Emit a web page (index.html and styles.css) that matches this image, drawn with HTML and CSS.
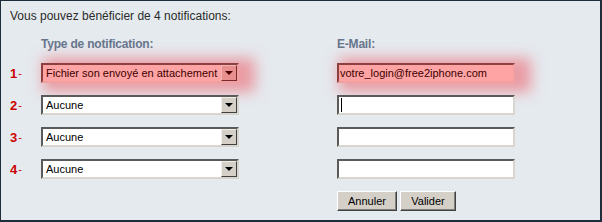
FILE: index.html
```html
<!DOCTYPE html>
<html lang="fr">
<head>
    <meta charset="UTF-8">
    <title>Notifications</title>
    <link rel="stylesheet" href="styles.css">
</head>
<body>
    <div class="panel">
        <p class="intro">Vous pouvez bénéficier de 4 notifications:</p>
        <div class="grid">
            <div></div>
            <div class="head">Type de notification:</div>
            <div></div>
            <div class="head">E-Mail:</div>

            <div class="num">1<span>-</span></div>
            <div class="select error"><span class="val">Fichier son envoyé en attachement</span><span class="arrow"></span></div>
            <div></div>
            <div class="input error">votre_login@free2iphone.com</div>

            <div class="num">2<span>-</span></div>
            <div class="select"><span class="val">Aucune</span><span class="arrow"></span></div>
            <div></div>
            <div class="input"><span class="caret"></span></div>

            <div class="num">3<span>-</span></div>
            <div class="select"><span class="val">Aucune</span><span class="arrow"></span></div>
            <div></div>
            <div class="input"></div>

            <div class="num">4<span>-</span></div>
            <div class="select"><span class="val">Aucune</span><span class="arrow"></span></div>
            <div></div>
            <div class="input"></div>

            <div></div>
            <div></div>
            <div></div>
            <div class="actions">
                <button class="btn btn-cancel">Annuler</button>
                <button class="btn btn-ok">Valider</button>
            </div>
        </div>
    </div>
</body>
</html>
```

FILE: styles.css
```css
* {
    margin: 0;
    padding: 0;
    box-sizing: border-box;
}
body {
    font-family: 'Liberation Sans', Arial, sans-serif;
    font-size: 12px;
    background: #e5eaef;
}
.panel {
    width: 602px;
    height: 222px;
    background: #e5eaef;
    border: 1px solid #1f2c39;
    border-right-width: 2px;
    border-bottom-width: 2px;
    padding: 8px 0 0 9px;
}
.intro {
    line-height: 14px;
    color: #2a2a2a;
}
.grid {
    display: grid;
    grid-template-columns: 31px 198px 98px 178px;
    grid-template-rows: 14px repeat(5, 20px);
    row-gap: 12px;
    margin-top: 14px;
}
.grid > div:nth-child(-n+4) {
    margin-bottom: 1px;
}
.head {
    font-weight: bold;
    color: #66768c;
    line-height: 14px;
    letter-spacing: -0.2px;
}
.num {
    color: #cc0000;
    font-weight: bold;
    display: flex;
    align-items: center;
    font-size: 13px;
}
.num span {
    font-weight: normal;
    font-size: 11px;
    margin-left: 1px;
}
.select,
.input {
    height: 20px;
    font-size: 11px;
    background: #fff;
    border: 2px solid;
    border-color: #5a5a5a #d8d5cf #d8d5cf #5a5a5a;
    display: flex;
    align-items: center;
    color: #000;
}
.select .val {
    flex: 1;
    padding-left: 3px;
    white-space: nowrap;
    overflow: hidden;
}
.arrow {
    width: 16px;
    height: 16px;
    background: #d4d0c8;
    border: 1px solid;
    border-color: #f0eee8 #404040 #404040 #f0eee8;
    position: relative;
}
.arrow::after {
    content: '';
    position: absolute;
    left: 3px;
    top: 5px;
    border-left: 4px solid transparent;
    border-right: 4px solid transparent;
    border-top: 4px solid #000;
}
.input {
    padding-left: 1px;
}
.caret {
    width: 1px;
    height: 14px;
    background: #000;
    margin-left: 1px;
}
.error {
    background: #ffa4a4;
    border-color: #8c4040 #f0a0a0 #f0a0a0 #8c4040;
    color: #3a0000;
    box-shadow: 9px 2px 14px 7px rgba(238, 90, 100, 0.55);
}
.error .arrow {
    background: #e89090;
    border-color: #f4b4b4 #7a2a2a #7a2a2a #f4b4b4;
}
.error .arrow::after {
    border-top-color: #4a0000;
}
.actions {
    display: flex;
    gap: 3px;
}
.btn {
    height: 20px;
    font-family: 'Liberation Sans', Arial, sans-serif;
    font-size: 11px;
    background: #d4d0c8;
    border: 1px solid;
    border-color: #fff #404040 #404040 #fff;
    box-shadow: inset -1px -1px 0 #808080;
    color: #000;
}
.btn-cancel {
    width: 60px;
}
.btn-ok {
    width: 56px;
}
```
